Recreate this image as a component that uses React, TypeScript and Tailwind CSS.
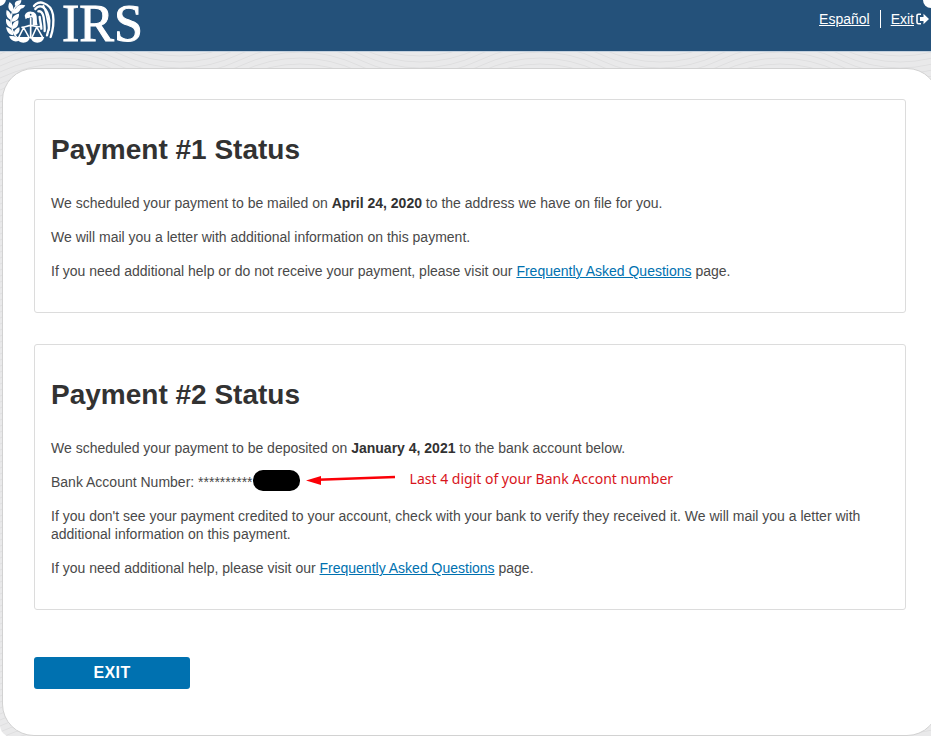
import React from "react";

interface StatusCardProps {
  id: string;
  title: string;
  children: React.ReactNode;
}

const FaqLink = () => (
  <a href="#faq" className="text-[#0071b0] underline">
    Frequently Asked Questions
  </a>
);

const StatusCard = ({ id, title, children }: StatusCardProps) => (
  <section
    aria-labelledby={id}
    className="rounded-[3px] border border-[#dcdcdc] px-4 py-8"
  >
    <h2 id={id} className="mb-[26px] text-[28px] leading-9 font-bold text-[#323232]">
      {title}
    </h2>
    <div className="space-y-4">{children}</div>
  </section>
);

const EagleEmblem = () => (
  <svg width="52" height="46" viewBox="0 0 156 138" fill="none" aria-hidden="true">
    {/* Olive branch */}
    <path d="M40 10C18 26 12 48 16 76c3 20 12 36 28 44" stroke="#fff" strokeWidth="4" />
    <g fill="#fff">
      <path d="M27 17C24 6 32 1 46 0c0 11-7 18-19 17Z" />
      <path d="M30 23c6-9 16-11 28-7-5 11-16 14-28 7Z" />
      <path d="M18 36C5 29 5 17 11 6c11 9 14 19 7 30Z" />
      <path d="M20 41c0-13 10-20 25-19-2 13-11 20-25 19Z" />
      <path d="M14 60C1 54-1 42 2 30c13 7 17 17 12 30Z" />
      <path d="M18 65c-2-13 7-22 21-24 1 14-7 23-21 24Z" />
      <path d="M15 84C2 80-1 68 0 56c13 5 18 15 15 28Z" />
      <path d="M19 88c-4-13 4-23 18-27 2 14-4 24-18 27Z" />
      <path d="M22 106C9 106 3 95 0 82c14 2 22 11 22 24Z" />
      <path d="M25 106c-4-11 3-20 15-24 3 12-3 21-15 24Z" />
      <path d="M39 122c-13 6-24 0-30-13 14-4 25 1 30 13Z" />
    </g>
    {/* Eagle head and neck */}
    <path
      fill="#fff"
      d="M56 47c3-9 11-13 20-12 9 0 15 6 16 14 1 11 0 20 3 27H80V56c0-4-3-5-6-4-4 2-7 3-10 2l-5 4Z"
    />
    <circle cx="74" cy="44" r="2.5" fill="#24517a" />
    {/* Wing feathers */}
    <g stroke="#fff" strokeWidth="7" strokeLinecap="round">
      <path d="M84 18c6-9 18-13 28-9 15 5 26 18 29 35 3 22 0 46-7 67" />
      <path d="M88 27c7-9 17-10 25-4 11 9 15 23 17 39 1 17-2 31-7 44" />
      <path d="M97 34c9-2 14 7 16 18 2 16 4 28 3 41" />
      <path d="M101 51c1 14 5 22 5 35" />
      <path d="M112 16c9 20 14 48 17 74" strokeWidth="5" />
    </g>
    {/* Scales */}
    <g stroke="#fff" strokeWidth="4.5" strokeLinecap="round">
      <path d="M74 54v60M48 82c12 0 17-6 26-6s15 6 27 4" strokeWidth="5" />
      <path d="m53 83-15 29M53 83l16 29M92 81l-14 31M92 81l18 31" />
    </g>
    <path
      fill="#fff"
      d="M32 111h40c-2 11-9 17-20 17s-18-6-20-17ZM74 111h41c-3 11-10 17-21 17s-18-6-20-17Z"
    />
  </svg>
);

const ExitIcon = () => (
  <svg width="13" height="12" viewBox="0 0 13 12" aria-hidden="true">
    <path d="M5 1.2H2.5C1.6 1.2 1 1.8 1 2.7v6.6c0 .9.6 1.5 1.5 1.5H5" fill="none" stroke="currentColor" strokeWidth="1.6" />
    <path d="M7.5.8 13 6l-5.5 5.2V8H4V4h3.5Z" fill="currentColor" />
  </svg>
);

const waveLines = [-24, -18, -12, -6, 0, 6, 12, 18, 24, 30, 36];

const WavePattern = () => (
  <svg className="absolute inset-0 size-full" aria-hidden="true">
    <defs>
      <pattern id="waves" width="240" height="24" patternUnits="userSpaceOnUse">
        {waveLines.map((y) => (
          <path key={y} d={`M0 ${y}q60-28 120 0t120 0`} fill="none" stroke="#dfdfe0" />
        ))}
      </pattern>
    </defs>
    <rect width="100%" height="100%" fill="url(#waves)" />
  </svg>
);

export default function App() {
  return (
    <div className="overflow-hidden bg-white font-['Liberation_Sans',Arial,sans-serif] text-sm leading-[18px] text-[#494949]">
      <div className="relative overflow-hidden rounded-bl-xl bg-[#e9e9ea]">
        <WavePattern />
        <header className="relative flex h-[52px] items-start justify-between border-b border-[#c3d0dd] bg-[#24517a] pl-1.5">
          <span className="absolute -top-2 -left-2 size-3.5 rounded-full bg-white" />
          <span className="absolute -top-2 -right-2 size-4 rounded-full bg-white" />
          <a href="#home" aria-label="IRS" className="flex items-start gap-1 text-white">
            <EagleEmblem />
            <span className="font-['Liberation_Serif',serif] text-[52px] leading-[48px] [-webkit-text-stroke:1px_white]">
              IRS
            </span>
          </a>
          <nav className="flex items-center pt-2.5 pr-0.5 text-white">
            <a href="#es" className="mr-2.5 underline">Español</a>
            <a href="#exit" className="flex items-center gap-0.5 border-l border-white pl-2.5">
              <span className="underline">Exit</span>
              <ExitIcon />
            </a>
          </nav>
        </header>

        <main className="relative mt-4 -mr-2 mb-px ml-0.5 rounded-[32px] border border-[#d2d2d2] bg-white pt-[30px] pr-8 pb-[46px] pl-[31px]">
          <div className="space-y-[31px]">
            <StatusCard id="payment-1" title="Payment #1 Status">
              <p>
                We scheduled your payment to be mailed on{" "}
                <strong className="text-[#323232]">April 24, 2020</strong> to the address we have on
                file for you.
              </p>
              <p>We will mail you a letter with additional information on this payment.</p>
              <p>
                If you need additional help or do not receive your payment, please visit our{" "}
                <FaqLink /> page.
              </p>
            </StatusCard>

            <StatusCard id="payment-2" title="Payment #2 Status">
              <p>
                We scheduled your payment to be deposited on{" "}
                <strong className="text-[#323232]">January 4, 2021</strong> to the bank account
                below.
              </p>
              <div className="flex h-[18px] items-end">
                <p>Bank Account Number: **********</p>
                <span className="h-[21px] w-[47px] shrink-0 rounded-[10px] bg-black" />
                <svg
                  width="90"
                  height="12"
                  viewBox="0 0 90 12"
                  className="mr-3.5 ml-1.5 shrink-0 self-start"
                  aria-hidden="true"
                >
                  <path d="M12 6.7 89 4" stroke="#fb0007" strokeWidth="2.5" />
                  <path d="M0 7.5 15 3v9Z" fill="#fb0007" />
                </svg>
                <p className="self-start font-['Noto_Sans',sans-serif] leading-3 text-[#d8151c]">
                  Last 4 digit of your Bank Accont number
                </p>
              </div>
              <p>
                If you don't see your payment credited to your account, check with your bank to
                verify they received it. We will mail you a letter with additional information on
                this payment.
              </p>
              <p>
                If you need additional help, please visit our <FaqLink /> page.
              </p>
            </StatusCard>
          </div>

          <button
            type="button"
            className="mt-[47px] h-8 w-[156px] rounded-[3px] bg-[#0071b0] text-base font-bold tracking-wide text-white"
          >
            EXIT
          </button>
        </main>
      </div>
    </div>
  );
}
